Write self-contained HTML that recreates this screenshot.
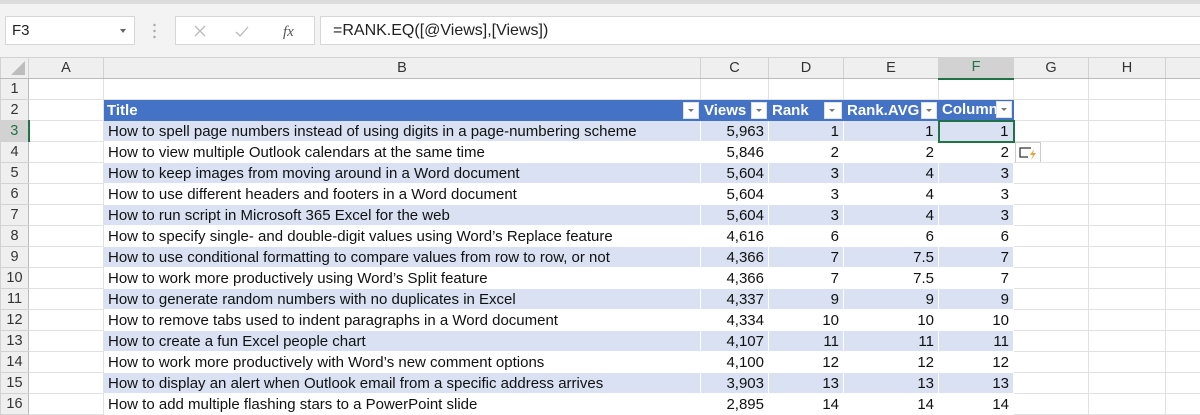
<!DOCTYPE html>
<html><head><meta charset="utf-8"><style>
*{margin:0;padding:0;box-sizing:border-box}
body{width:1200px;height:407px;overflow:hidden;background:#fff;font-family:"Liberation Sans",sans-serif;position:relative}
.top{position:absolute;left:0;top:0;width:1200px;height:57px;background:#f3f3f3;border-top:4px solid #dcdcdc}
.nb{position:absolute;left:5px;top:16px;width:130px;height:29px;background:#fff;border:1px solid #d6d6d6;font-size:15px;padding:5px 0 0 6px;color:#222}
.nb:after{content:"";position:absolute;right:8px;top:12px;border:3px solid transparent;border-top:4px solid #666}
.dots{position:absolute;left:153px;top:22px;width:3px;height:18px;background:radial-gradient(circle,#aaa 1px,transparent 1.5px) 0 0/3px 6px}
.fxb{position:absolute;left:175px;top:16px;width:140px;height:29px;background:#fff;border:1px solid #d6d6d6}
.fb{position:absolute;left:320px;top:16px;width:890px;height:29px;background:#fff;border:1px solid #d6d6d6;font-size:16px;padding:5px 0 0 12px;color:#222}
table{position:absolute;left:0;top:57px;border-collapse:collapse;table-layout:fixed;width:1200px}
td{height:21px;border:1px solid #e1e1e1;font-size:15px;color:#111;white-space:nowrap;overflow:hidden;padding:0 4px;line-height:19px;vertical-align:middle}
tr.h td{background:#efefef;text-align:center;color:#333;font-size:14.5px;border-color:#d2d2d2;border-bottom:1px solid #bbb}
td.rh{background:#efefef;text-align:center;color:#333;font-size:14.5px;border-color:#d2d2d2;border-right:1px solid #bbb;padding:0}
td.t{border-color:#fff}
tr.b td.t{background:#d9e1f2}
td.n{text-align:right}
tr.hd td.t{background:#4472c4;color:#fff;font-weight:bold;border-color:#4472c4;padding:0}
.w{position:relative;height:19px;line-height:19px;padding-left:3px;overflow:hidden}
.fl{position:absolute;right:1px;top:1px;width:16px;height:17px;background:#fff;border:1px solid #e0e0e0}
.fl:after{content:"";position:absolute;left:4px;top:6px;border:3px solid transparent;border-top:3px solid #777}
</style></head><body>
<div class="top"></div>
<div class="nb">F3</div>
<div class="dots"></div>
<div class="fxb">
<svg width="140" height="29" style="position:absolute;left:0;top:0"><path d="M19 9l10 10M29 9l-10 10" stroke="#bbb" stroke-width="1.3" fill="none"/><path d="M60 15l4 4 8-9" stroke="#bbb" stroke-width="1.3" fill="none"/><text x="107" y="19" font-family="Liberation Serif" font-style="italic" font-size="15" fill="#555">fx</text></svg>
</div>
<div class="fb">=RANK.EQ([@Views],[Views])</div>
<table>
<colgroup><col style="width:28px"><col style="width:75px"><col style="width:597px"><col style="width:68px"><col style="width:75px"><col style="width:95px"><col style="width:75px"><col style="width:75px"><col style="width:77px"><col style="width:35px"></colgroup>
<tr class="h"><td style="background:#efefef;position:relative"><svg width="16" height="16" style="position:absolute;right:2px;bottom:2px"><path d="M15 1V15H1Z" fill="#bdbdbd"/></svg></td><td>A</td><td>B</td><td>C</td><td>D</td><td>E</td><td style="background:#d2d2d2;border-bottom:2px solid #217346;color:#217346">F</td><td>G</td><td>H</td><td></td></tr>
<tr><td class="rh">1</td><td></td><td></td><td></td><td></td><td></td><td></td><td></td><td></td><td></td></tr>
<tr class="hd"><td class="rh">2</td><td></td><td class="t"><div class="w">Title<span class="fl"></span></div></td><td class="t"><div class="w">Views<span class="fl"></span></div></td><td class="t"><div class="w">Rank<span class="fl" style="width:18px"></span></div></td><td class="t"><div class="w">Rank.AVG<span class="fl"></span></div></td><td class="t"><div class="w">Column<span class="fl"></span></div></td><td></td><td></td><td></td></tr>
<tr class="b"><td class="rh" style="background:#d2d2d2;color:#217346;border-right:2px solid #217346">3</td><td></td><td class="t">How to spell page numbers instead of using digits in a page-numbering scheme</td><td class="t n">5,963</td><td class="t n">1</td><td class="t n">1</td><td class="t n" style="border:2px solid #217346">1</td><td></td><td></td><td></td></tr>
<tr><td class="rh">4</td><td></td><td class="t">How to view multiple Outlook calendars at the same time</td><td class="t n">5,846</td><td class="t n">2</td><td class="t n">2</td><td class="t n">2</td><td style="position:relative"><svg width="26" height="22" style="position:absolute;left:1px;top:0"><rect x="0.5" y="0.5" width="25" height="21" fill="#fff" stroke="#ccc"/><path d="M16 6H5v9h8" stroke="#333" stroke-width="1.3" fill="none"/><path d="M19 7l-4 6h3l-2 5 5-7h-3z" fill="#e8a23a"/></svg></td><td></td><td></td></tr>
<tr class="b"><td class="rh">5</td><td></td><td class="t">How to keep images from moving around in a Word document</td><td class="t n">5,604</td><td class="t n">3</td><td class="t n">4</td><td class="t n">3</td><td></td><td></td><td></td></tr>
<tr><td class="rh">6</td><td></td><td class="t">How to use different headers and footers in a Word document</td><td class="t n">5,604</td><td class="t n">3</td><td class="t n">4</td><td class="t n">3</td><td></td><td></td><td></td></tr>
<tr class="b"><td class="rh">7</td><td></td><td class="t">How to run script in Microsoft 365 Excel for the web</td><td class="t n">5,604</td><td class="t n">3</td><td class="t n">4</td><td class="t n">3</td><td></td><td></td><td></td></tr>
<tr><td class="rh">8</td><td></td><td class="t">How to specify single- and double-digit values using Word’s Replace feature</td><td class="t n">4,616</td><td class="t n">6</td><td class="t n">6</td><td class="t n">6</td><td></td><td></td><td></td></tr>
<tr class="b"><td class="rh">9</td><td></td><td class="t">How to use conditional formatting to compare values from row to row, or not</td><td class="t n">4,366</td><td class="t n">7</td><td class="t n">7.5</td><td class="t n">7</td><td></td><td></td><td></td></tr>
<tr><td class="rh">10</td><td></td><td class="t">How to work more productively using Word’s Split feature</td><td class="t n">4,366</td><td class="t n">7</td><td class="t n">7.5</td><td class="t n">7</td><td></td><td></td><td></td></tr>
<tr class="b"><td class="rh">11</td><td></td><td class="t">How to generate random numbers with no duplicates in Excel</td><td class="t n">4,337</td><td class="t n">9</td><td class="t n">9</td><td class="t n">9</td><td></td><td></td><td></td></tr>
<tr><td class="rh">12</td><td></td><td class="t">How to remove tabs used to indent paragraphs in a Word document</td><td class="t n">4,334</td><td class="t n">10</td><td class="t n">10</td><td class="t n">10</td><td></td><td></td><td></td></tr>
<tr class="b"><td class="rh">13</td><td></td><td class="t">How to create a fun Excel people chart</td><td class="t n">4,107</td><td class="t n">11</td><td class="t n">11</td><td class="t n">11</td><td></td><td></td><td></td></tr>
<tr><td class="rh">14</td><td></td><td class="t">How to work more productively with Word’s new comment options</td><td class="t n">4,100</td><td class="t n">12</td><td class="t n">12</td><td class="t n">12</td><td></td><td></td><td></td></tr>
<tr class="b"><td class="rh">15</td><td></td><td class="t">How to display an alert when Outlook email from a specific address arrives</td><td class="t n">3,903</td><td class="t n">13</td><td class="t n">13</td><td class="t n">13</td><td></td><td></td><td></td></tr>
<tr><td class="rh">16</td><td></td><td class="t">How to add multiple flashing stars to a PowerPoint slide</td><td class="t n">2,895</td><td class="t n">14</td><td class="t n">14</td><td class="t n">14</td><td></td><td></td><td></td></tr>
</table>
</body></html>
